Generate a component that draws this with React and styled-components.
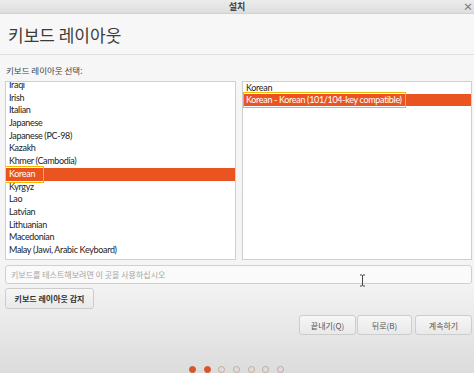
import React from 'react';
import styled, { createGlobalStyle } from 'styled-components';

const GlobalStyle = createGlobalStyle`
  html, body {
    margin: 0;
    padding: 0;
    background: #f2f2f2;
  }
  #root {
    width: 474px;
    height: 373px;
    overflow: hidden;
  }
`

const Window = styled.div`
  position: relative;
  width: 474px;
  height: 373px;
  display: flex;
  flex-direction: column;
  font-family: "Noto Sans", "Noto Sans CJK KR", sans-serif;
  color: #333;
  background: linear-gradient(#f7f7f7 0px, #f4f4f4 280px, #dcdcdc 373px);
  overflow: hidden;
`

const TitleBar = styled.div`
  height: 14px;
  box-sizing: border-box;
  display: flex;
  align-items: center;
  justify-content: center;
  position: relative;
  background: linear-gradient(#ececec, #dedede);
  border-bottom: 1px solid #d2d2d2;
  font-family: "Noto Sans CJK KR", sans-serif;
  font-size: 9px;
  font-weight: 700;
  color: #444;
`

const CloseMark = styled.span`
  position: absolute;
  right: 1px;
  top: 0px;
  font-size: 10px;
  line-height: 13px;
  color: #777;
`

const Header = styled.header`
  height: 43px;
  display: flex;
  align-items: center;
  padding: 1px 0 0 8px;
  box-sizing: border-box;
  font-family: "Noto Sans CJK KR", sans-serif;
  font-size: 17px;
  font-weight: 400;
  color: #3c3c3c;
  background: #f7f7f7;
  border-bottom: 1px solid #e0e0e0;
`

const Body = styled.main`
  display: flex;
  flex-direction: column;
  padding: 0 2px 0 5px;
`

const Label = styled.div`
  height: 26px;
  display: flex;
  align-items: flex-end;
  padding: 0 0 5px 1px;
  box-sizing: border-box;
  font-family: "Noto Sans CJK KR", sans-serif;
  font-size: 8.5px;
  color: #444;
`

const Lists = styled.div`
  display: grid;
  grid-template-columns: 231px 230px;
  gap: 6px;
  height: 179px;
`

const ListBox = styled.div`
  background: #fff;
  border: 1px solid #cfcfcf;
  overflow: hidden;
  position: relative;
`

const ListInner = styled.div`
  margin-top: ${p => p.$offset}px;
`

const Row = styled.div`
  position: relative;
  height: ${p => p.$h}px;
  line-height: ${p => p.$h}px;
  padding-left: 3px;
  font-family: Lato, "Noto Sans", sans-serif;
  font-size: 9px;
  letter-spacing: -0.33px;
  white-space: nowrap;
  color: ${p => (p.$selected ? '#fff' : '#222')};
  background: ${p => (p.$selected ? '#e95420' : 'transparent')};
`

const Mark = styled.span`
  position: absolute;
  left: ${p => p.$left}px;
  top: -2px;
  width: ${p => p.$w}px;
  bottom: -2px;
  border: 1.5px solid #f5b800;
  box-sizing: border-box;
  pointer-events: none;
`

const TestInput = styled.input`
  margin-top: 5px;
  height: 19px;
  box-sizing: border-box;
  border: 1px solid #d0d0d0;
  border-radius: 3px;
  background: #fafafa;
  padding: 0 5px;
  font-family: "Noto Sans CJK KR", sans-serif;
  font-size: 8px;
  outline: none;
  &::placeholder {
    color: #a5a5a5;
  }
`

const Button = styled.button`
  height: ${p => p.$h || 20}px;
  width: ${p => p.$w}px;
  box-sizing: border-box;
  border: 1px solid #cdcdcd;
  border-radius: 3px;
  background: linear-gradient(#f6f6f6, #e9e9e9);
  font-family: "Noto Sans CJK KR", sans-serif;
  font-size: 8px;
  font-weight: ${p => (p.$bold ? 700 : 400)};
  color: ${p => (p.$bold ? '#333' : '#555')};
  padding: 0;
  cursor: pointer;
`

const DetectRow = styled.div`
  margin-top: 4px;
  display: flex;
`

const Actions = styled.div`
  margin-top: 6px;
  display: flex;
  justify-content: flex-end;
  gap: 1px;
  & > button:last-child {
    margin-left: 2px;
  }
`

const Dots = styled.div`
  margin-top: 31px;
  display: flex;
  justify-content: center;
  gap: 7.7px;
  padding-right: 4px;
`

const Dot = styled.span`
  width: 7px;
  height: 7px;
  border-radius: 50%;
  box-sizing: border-box;
  border: 1px solid ${p => (p.$done ? '#d2532a' : '#c9a79a')};
  background: ${p => (p.$done ? '#dc5428' : 'transparent')};
`

const Cursor = styled.svg`
  position: absolute;
  left: 359px;
  top: 274px;
`

const leftItems = [
  'Iraqi', 'Irish', 'Italian', 'Japanese', 'Japanese (PC-98)', 'Kazakh',
  'Khmer (Cambodia)', 'Korean', 'Kyrgyz', 'Lao', 'Latvian', 'Lithuanian',
  'Macedonian', 'Malay (Jawi, Arabic Keyboard)', 'Maltese',
];

const rightItems = ['Korean', 'Korean - Korean (101/104-key compatible)'];

export default function App() {
  return (
    <>
      <GlobalStyle />
      <Window>
        <TitleBar>
          설치
          <CloseMark>×</CloseMark>
        </TitleBar>
        <Header>키보드 레이아웃</Header>
        <Body>
          <Label>키보드 레이아웃 선택:</Label>
          <Lists>
            <ListBox>
              <ListInner $offset={-3}>
                {leftItems.map(name => (
                  <Row key={name} $h={12.7} $selected={name === 'Korean'}>
                    {name}
                    {name === 'Korean' && <Mark $left={-2} $w={40} />}
                  </Row>
                ))}
              </ListInner>
            </ListBox>
            <ListBox>
              <ListInner $offset={0}>
                {rightItems.map((name, i) => (
                  <Row key={name} $h={12.2} $selected={i === 1}>
                    {name}
                    {i === 1 && <Mark $left={0} $w={163} />}
                  </Row>
                ))}
              </ListInner>
            </ListBox>
          </Lists>
          <TestInput placeholder="키보드를 테스트해보려면 이 곳을 사용하십시오" />
          <DetectRow>
            <Button $w={89} $h={21} $bold>키보드 레이아웃 감지</Button>
          </DetectRow>
          <Actions>
            <Button $w={57}>끝내기(Q)</Button>
            <Button $w={55}>뒤로(B)</Button>
            <Button $w={57}>계속하기</Button>
          </Actions>
          <Dots>
            {[0, 1, 2, 3, 4, 5, 6].map(i => (
              <Dot key={i} $done={i < 2} />
            ))}
          </Dots>
        </Body>
        <Cursor width="7" height="13" viewBox="0 0 7 13">
          <path d="M1 1h2l0.5 0.5L4 1h2M3.5 1.5v10M1 12h2l0.5-0.5L4 12h2" stroke="#444" strokeWidth="1" fill="none" />
        </Cursor>
      </Window>
    </>
  );
}
